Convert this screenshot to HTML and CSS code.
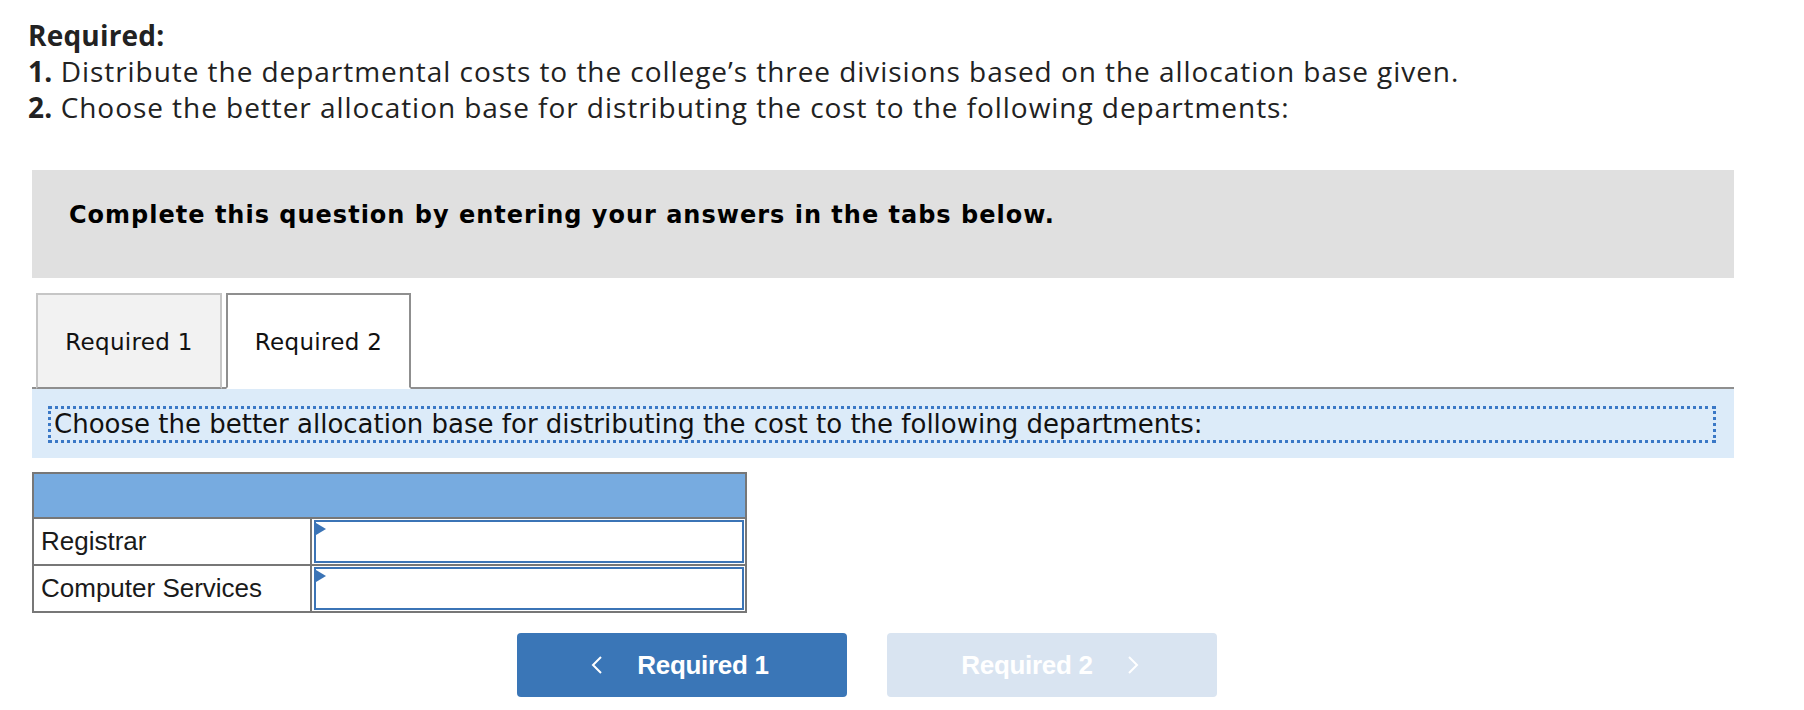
FILE: index.html
```html
<!DOCTYPE html>
<html lang="en">
<head>
<meta charset="utf-8">
<title>Required</title>
<link rel="stylesheet" href="styles.css">
</head>
<body>
<div class="intro">
  <p class="line"><b>Required:</b></p>
  <p class="line"><b>1.</b> Distribute the departmental costs to the college’s three divisions based on the allocation base given.</p>
  <p class="line"><b>2.</b> Choose the better allocation base for distributing the cost to the following departments:</p>
</div>
<div class="main">
  <div class="banner">Complete this question by entering your answers in the tabs below.</div>
  <div class="tabs">
    <div class="tab">Required 1</div>
    <div class="tab active">Required 2</div>
  </div>
  <div class="panel">
    <div class="prompt">Choose the better allocation base for distributing the cost to the following departments:</div>
  </div>
  <div class="grid">
    <div class="grid-head"></div>
    <div class="grid-row">
      <div class="label">Registrar</div>
      <div class="cell"><div class="input"><span class="flag"></span></div></div>
    </div>
    <div class="grid-row">
      <div class="label">Computer Services</div>
      <div class="cell"><div class="input"><span class="flag"></span></div></div>
    </div>
  </div>
  <div class="nav">
    <button class="btn prev" type="button">
      <svg class="chev" width="12" height="20" viewBox="0 0 12 20"><polyline points="10,2 2,10 10,18" fill="none" stroke="#ffffff" stroke-width="2"/></svg>
      <span>Required 1</span>
    </button>
    <button class="btn next" type="button">
      <span>Required 2</span>
      <svg class="chev" width="12" height="20" viewBox="0 0 12 20"><polyline points="2,2 10,10 2,18" fill="none" stroke="#ffffff" stroke-width="2"/></svg>
    </button>
  </div>
</div>
</body>
</html>
```

FILE: styles.css
```css
html, body {
  margin: 0;
  padding: 0;
  background: #ffffff;
}

body {
  width: 1804px;
  height: 710px;
  overflow: hidden;
}

.intro {
  padding: 17px 0 0 28px;
  font-family: "Open Sans", Lato, sans-serif;
  font-size: 28px;
  letter-spacing: 0.95px;
  color: #222222;
}

.line {
  margin: 0;
  line-height: 36px;
  height: 36px;
  white-space: nowrap;
}

.line b {
  font-weight: 700;
  letter-spacing: 0.2px;
}

.main {
  margin-left: 32px;
  width: 1702px;
}

.banner {
  margin-top: 45px;
  height: 108px;
  box-sizing: border-box;
  padding: 31px 0 0 37px;
  background: #e0e0e0;
  font-family: "DejaVu Sans", Verdana, sans-serif;
  font-weight: 700;
  font-size: 24px;
  letter-spacing: 1px;
  line-height: 28px;
  color: #000000;
}

.tabs {
  display: flex;
  gap: 4px;
  margin-top: 15px;
  padding-left: 4px;
  margin-bottom: -2px;
  position: relative;
  z-index: 1;
}

.tab {
  box-sizing: border-box;
  width: 186px;
  height: 96px;
  display: flex;
  align-items: center;
  justify-content: center;
  padding-top: 2px;
  background: #f2f2f2;
  border: 2px solid #c6c6c6;
  border-bottom: 2px solid #8f8f8f;
  font-family: "DejaVu Sans", Verdana, sans-serif;
  font-size: 23px;
  letter-spacing: 0.3px;
  color: #111111;
}

.tab.active {
  width: 185px;
  background: #ffffff;
  border-color: #8f8f8f;
  border-bottom-color: #ffffff;
}

.panel {
  border-top: 2px solid #8f8f8f;
  background: #dcebf9;
  height: 71px;
  box-sizing: border-box;
  padding: 17px 18px 0 16px;
}

.prompt {
  border: 3px dotted #3a78c6;
  height: 37px;
  box-sizing: border-box;
  padding-left: 3px;
  font-family: "DejaVu Sans", Verdana, sans-serif;
  font-size: 26px;
  line-height: 30px;
  color: #111111;
  white-space: nowrap;
}

.grid {
  margin-top: 14px;
  width: 715px;
  box-sizing: border-box;
  border: 2px solid #777777;
  font-family: "Liberation Sans", Arial, sans-serif;
  font-size: 26px;
  color: #1a1a1a;
}

.grid-head {
  height: 43px;
  background: #77abe0;
  border-bottom: 2px solid #777777;
}

.grid-row {
  display: flex;
  height: 45px;
}

.grid-row + .grid-row {
  border-top: 2px solid #777777;
}

.label {
  width: 278px;
  box-sizing: border-box;
  border-right: 2px solid #777777;
  padding-left: 7px;
  display: flex;
  align-items: center;
  white-space: nowrap;
}

.cell {
  flex: 1;
  padding: 1px 1px 1px 2px;
  box-sizing: border-box;
  display: flex;
}

.input {
  flex: 1;
  position: relative;
  border: 2px solid #3b74b6;
  background: #ffffff;
}

.flag {
  position: absolute;
  left: 0;
  top: 1px;
  width: 0;
  height: 0;
  border-top: 6px solid transparent;
  border-bottom: 6px solid transparent;
  border-left: 10px solid #3b74b6;
}

.nav {
  display: flex;
  gap: 40px;
  margin-top: 20px;
  padding-left: 485px;
}

.btn {
  width: 330px;
  height: 64px;
  border: none;
  border-radius: 4px;
  display: flex;
  align-items: center;
  justify-content: center;
  gap: 34px;
  font-family: "Liberation Sans", Arial, sans-serif;
  font-weight: 700;
  font-size: 26px;
  letter-spacing: -0.3px;
  color: #ffffff;
  padding: 0 4px 0 0;
}

.btn.prev {
  background: #3a76b7;
}

.btn.next {
  background: #d9e4f1;
}

.chev {
  display: block;
}
```
